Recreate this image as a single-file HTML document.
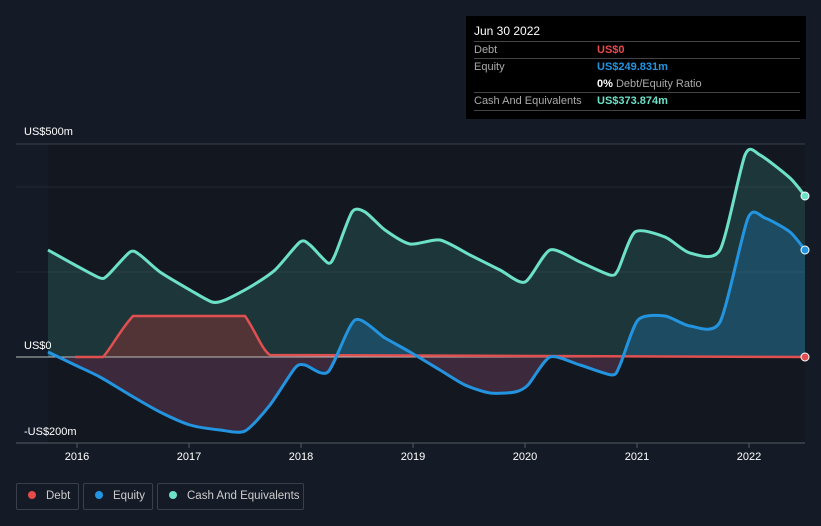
<!DOCTYPE html>
<html><head><style>
html,body{margin:0;width:821px;height:526px;overflow:hidden}
body{background:#151b26;font-family:"Liberation Sans",sans-serif;position:relative}
.tt{position:absolute;left:466px;top:16px;width:340px;height:103px;background:#000;color:#fff;font-size:11px}
.tt .r{position:absolute;left:8px;width:326px;border-top:1px solid #444}
.lbl{color:#aaa}
.leg{position:absolute;top:483px;height:27px;border:1px solid #3a404b;border-radius:2px;color:#ccc;font-size:11.5px;line-height:25px;box-sizing:border-box;white-space:nowrap}
.dot{display:inline-block;width:8px;height:8px;border-radius:50%;margin:0 10px 0 11px;vertical-align:0px}
</style></head><body>
<svg id="s" width="821" height="526" style="position:absolute;left:0;top:0">
<rect x="48" y="144" width="757" height="299" fill="#131820"/>
<line x1="16" y1="144" x2="805" y2="144" stroke="#3a404b"/>
<line x1="16" y1="187" x2="805" y2="187" stroke="#222831"/>
<line x1="16" y1="272" x2="805" y2="272" stroke="#222831"/>
<path id="cf" fill="rgba(90,210,190,0.16)"/>
<path id="ef" fill="rgba(33,150,243,0.22)"/>
<path id="nf" fill="rgba(120,30,35,0.4)"/>
<path id="df" fill="rgba(150,50,50,0.45)"/>
<line x1="16" y1="357" x2="805" y2="357" stroke="#bbb"/>
<line x1="16" y1="443" x2="805" y2="443" stroke="#555b66"/>
<g stroke="#555b66"><line x1="77" y1="443" x2="77" y2="448"/><line x1="189" y1="443" x2="189" y2="448"/><line x1="301" y1="443" x2="301" y2="448"/><line x1="413" y1="443" x2="413" y2="448"/><line x1="525" y1="443" x2="525" y2="448"/><line x1="637" y1="443" x2="637" y2="448"/><line x1="749" y1="443" x2="749" y2="448"/></g>
<path id="dl" fill="none" stroke="#e05050" stroke-width="2.5"/>
<path id="el" fill="none" stroke="#2394e0" stroke-width="3"/>
<path id="cl" fill="none" stroke="#6de0c8" stroke-width="3"/>
<circle cx="805" cy="196" r="4" fill="#6de0c8" stroke="#fff" stroke-width="1"/>
<circle cx="805" cy="250" r="4" fill="#2394e0" stroke="#fff" stroke-width="1"/>
<circle cx="805" cy="357" r="4" fill="#e05050" stroke="#fff" stroke-width="1"/>
<g fill="#fff" font-size="11" font-family="Liberation Sans">
<text x="24" y="135">US$500m</text><text x="24" y="349">US$0</text><text x="24" y="435">-US$200m</text>
<g text-anchor="middle"><text x="77" y="460">2016</text><text x="189" y="460">2017</text><text x="301" y="460">2018</text><text x="413" y="460">2019</text><text x="525" y="460">2020</text><text x="637" y="460">2021</text><text x="749" y="460">2022</text></g>
</g>
</svg>
<div class="tt">
<div style="position:absolute;left:8px;top:8px;font-size:12px">Jun 30 2022</div>
<div class="r" style="top:25px"><span class="lbl" style="position:absolute;top:2px">Debt</span><span style="position:absolute;left:123px;top:2px;color:#e84a4a;font-weight:bold">US$0</span></div>
<div class="r" style="top:42px"><span class="lbl" style="position:absolute;top:2px">Equity</span><span style="position:absolute;left:123px;top:2px;color:#2394e0;font-weight:bold">US$249.831m</span><span style="position:absolute;left:123px;top:19px;white-space:nowrap"><b>0%</b> <span class="lbl">Debt/Equity Ratio</span></span></div>
<div class="r" style="top:76px"><span class="lbl" style="position:absolute;top:2px">Cash And Equivalents</span><span style="position:absolute;left:123px;top:2px;color:#6de0c8;font-weight:bold">US$373.874m</span></div>
<div class="r" style="top:94px"></div>
</div>
<div class="leg" style="left:16px;width:63px"><span class="dot" style="background:#e84a4a"></span>Debt</div>
<div class="leg" style="left:83px;width:70px"><span class="dot" style="background:#2394e0"></span>Equity</div>
<div class="leg" style="left:157px;width:147px"><span class="dot" style="background:#6de0c8"></span>Cash And Equivalents</div>
<script>
function sm(p,t){t=t||0.12;var d="M"+p[0][0]+","+p[0][1];for(var i=0;i<p.length-1;i++){var a=p[i-1]||p[i],b=p[i],c=p[i+1],e=p[i+2]||c;d+=" C"+(b[0]+(c[0]-a[0])*t)+","+(b[1]+(c[1]-a[1])*t)+" "+(c[0]-(e[0]-b[0])*t)+","+(c[1]-(e[1]-b[1])*t)+" "+c[0]+","+c[1];}return d;}
var C=[[48,250],[75,265],[100,278],[108,275],[130,252],[140,255],[160,272],[190,290],[212,302],[225,300],[250,287],[275,270],[300,242],[310,245],[328,263],[335,255],[352,212],[365,212],[385,230],[410,244],[440,240],[470,255],[500,270],[525,282],[550,250],[580,262],[610,275],[618,270],[635,232],[665,237],[690,253],[720,250],[745,155],[760,155],[790,178],[805,196]];
var E=[[48,352],[75,365],[100,377],[130,395],[160,412],[190,425],[220,430],[245,431],[270,405],[295,368],[305,365],[328,372],[355,320],[385,338],[410,352],[440,370],[465,385],[490,393],[515,392],[528,385],[550,357],[580,365],[612,375],[620,365],[638,320],[665,316],[690,326],[720,322],[748,218],[765,218],[790,232],[805,250]];
var D="M75,357 L103,357 C110,350 120,330 133,316 L245,316 C255,330 262,350 270,355 L805,357";
function g(id,v){document.getElementById(id).setAttribute("d",v);}
g("cl",sm(C));g("el",sm(E));g("dl",D);
g("cf",sm(C)+" L805,357 L48,357Z");g("ef",sm(E)+" L805,357 L48,357Z");
g("df","M103,357 C110,350 120,330 133,316 L245,316 C255,330 262,350 270,357Z");
g("nf","M60,357 "+sm(E.slice(1,12)).replace("M","L")+" L340,357Z M410,357 "+sm(E.slice(14,21)).replace("M","L")+"Z M550,357 "+sm(E.slice(20,24)).replace("M","L")+" L625,357Z");
</script>
</body></html>
